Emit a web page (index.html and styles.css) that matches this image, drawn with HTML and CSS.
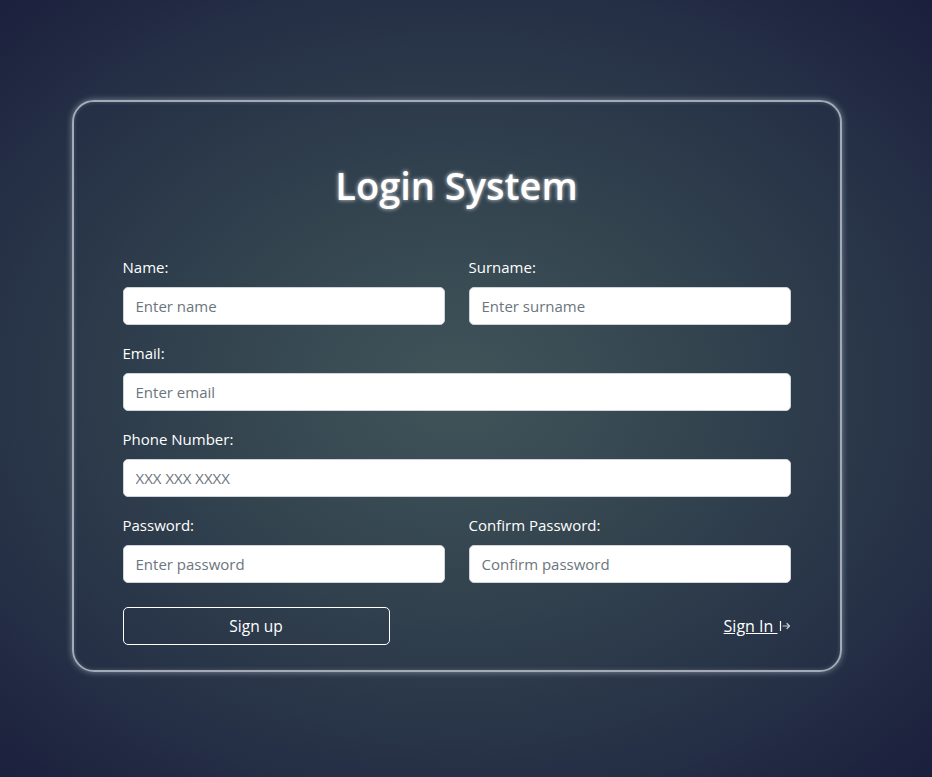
FILE: index.html
```html
<!DOCTYPE html>
<html lang="en">
<head>
<meta charset="utf-8">
<title>Login System</title>
<link rel="stylesheet" href="styles.css">
</head>
<body>
<div class="page">
  <form class="card">
    <h1 class="title">Login System</h1>
    <div class="grid">
      <div class="field">
        <label class="label">Name:</label>
        <input class="input" type="text" placeholder="Enter name">
      </div>
      <div class="field">
        <label class="label">Surname:</label>
        <input class="input" type="text" placeholder="Enter surname">
      </div>
      <div class="field wide">
        <label class="label">Email:</label>
        <input class="input" type="email" placeholder="Enter email">
      </div>
      <div class="field wide">
        <label class="label">Phone Number:</label>
        <input class="input" type="tel" placeholder="XXX XXX XXXX">
      </div>
      <div class="field">
        <label class="label">Password:</label>
        <input class="input" type="password" placeholder="Enter password">
      </div>
      <div class="field">
        <label class="label">Confirm Password:</label>
        <input class="input" type="password" placeholder="Confirm password">
      </div>
    </div>
    <div class="actions">
      <button class="btn" type="button">Sign up</button>
      <a class="signin" href="#"><span class="signin-text">Sign In </span><svg class="signin-icon" width="12" height="12" viewBox="0 0 12 12"><path d="M1.5 1v10" stroke="#ffffff" stroke-width="1.2" fill="none"/><path d="M4 6h6.5M8 3.5l2.5 2.5L8 8.5" stroke="#c9ced6" stroke-width="1.2" fill="none" stroke-linecap="round" stroke-linejoin="round"/></svg></a>
    </div>
  </form>
</div>
</body>
</html>
```

FILE: styles.css
```css
* { box-sizing: border-box; }
html, body { margin: 0; height: 100%; }
body {
  font-family: "Open Sans", "Noto Sans", sans-serif;
  color: #ffffff;
  background: radial-gradient(ellipse 75% 70% at 49% 50%, #415459 0%, #33444f 35%, #242e45 75%, #1a1e3b 100%);
  overflow: hidden;
}
.page {
  min-height: 100%;
  padding: 100px 19px 0 0;
  display: flex;
  justify-content: center;
  align-items: flex-start;
}
.card {
  width: 770px;
  border: 2px solid #a3abb6;
  border-radius: 22px;
  padding: 48px 49px 25px;
  box-shadow: 0 0 6px rgba(200, 210, 225, 0.55), inset 0 0 4px rgba(200, 210, 225, 0.25);
}
.title {
  margin: 11px 0 46px;
  text-align: center;
  font-size: 38px;
  line-height: 48px;
  font-weight: 600;
  color: #ffffff;
  text-shadow: 0 0 4px rgba(255, 255, 255, 0.8);
}
.grid {
  display: grid;
  grid-template-columns: 1fr 1fr;
  column-gap: 24px;
  row-gap: 16px;
}
.field { display: flex; flex-direction: column; }
.wide { grid-column: 1 / -1; }
.label {
  font-size: 15px;
  line-height: 24px;
  margin-bottom: 8px;
  color: #ffffff;
}
.input {
  height: 38px;
  border: 1px solid #ced4da;
  border-radius: 5px;
  background: #ffffff;
  padding: 0 12px;
  font-family: inherit;
  font-size: 15px;
  color: #212529;
  outline: none;
}
.input::placeholder { color: #6c757d; }
.actions {
  margin-top: 24px;
  display: flex;
  justify-content: space-between;
  align-items: center;
}
.btn {
  width: 267px;
  height: 38px;
  border: 1px solid #ffffff;
  border-radius: 5px;
  background: transparent;
  color: #ffffff;
  font-family: inherit;
  font-size: 15.5px;
}
.signin {
  display: flex;
  align-items: center;
  color: #ffffff;
  font-size: 16px;
  text-decoration: none;
}
.signin-text { text-decoration: underline; white-space: pre; }
.signin-icon { margin-left: 1px; }
```
